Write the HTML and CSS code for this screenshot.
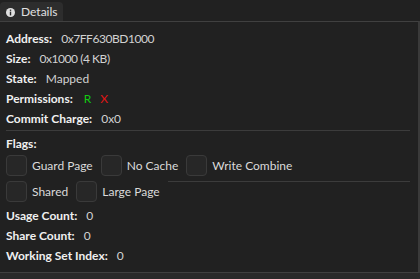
FILE: index.html
```html
<!DOCTYPE html>
<html lang="en">
<head>
    <meta charset="UTF-8">
    <title>Details</title>
    <link rel="stylesheet" href="styles.css">
</head>
<body>
    <div class="tab-bar">
        <div class="tab">
            <svg class="tab-icon" width="9" height="9" viewBox="0 0 9 9">
                <circle cx="4.5" cy="4.5" r="4.5" fill="#e0e0e0"/>
                <rect x="3.8" y="1.6" width="1.4" height="1.3" fill="#2b2b2b"/>
                <rect x="3.8" y="3.6" width="1.4" height="3.8" fill="#2b2b2b"/>
            </svg>
            <span>Details</span>
        </div>
    </div>

    <div class="panel">
        <div class="row"><span class="label">Address:</span><span class="value hex">0x7FF630BD1000</span></div>
        <div class="row"><span class="label">Size:</span><span class="value hex">0x1000 (4 KB)</span></div>
        <div class="row"><span class="label">State:</span><span class="value">Mapped</span></div>
        <div class="row">
            <span class="label">Permissions:</span>
            <span class="perm perm-r">R</span>
            <span class="perm perm-x">X</span>
        </div>
        <div class="row"><span class="label">Commit Charge:</span><span class="value">0x0</span></div>

        <div class="separator"></div>

        <div class="row"><span class="label">Flags:</span></div>
        <div class="flags">
            <label class="flag"><span class="box"></span>Guard Page</label>
            <label class="flag"><span class="box"></span>No Cache</label>
            <label class="flag"><span class="box"></span>Write Combine</label>
        </div>
        <div class="flags flags-second">
            <label class="flag"><span class="box"></span>Shared</label>
            <label class="flag"><span class="box"></span>Large Page</label>
            <div class="flags-rule"></div>
        </div>

        <div class="row"><span class="label">Usage Count:</span><span class="value">0</span></div>
        <div class="row"><span class="label">Share Count:</span><span class="value">0</span></div>
        <div class="row"><span class="label">Working Set Index:</span><span class="value">0</span></div>
    </div>

    <div class="footer"></div>
</body>
</html>
```

FILE: styles.css
```css
* {
    margin: 0;
    padding: 0;
    box-sizing: border-box;
}

body {
    width: 420px;
    height: 279px;
    overflow: hidden;
    background: #212121;
    font-family: 'Lato', 'Noto Sans', sans-serif;
    font-size: 12px;
    color: #d4d4d4;
}

.tab-bar {
    height: 21px;
    padding-top: 2px;
    display: flex;
}

.tab {
    display: flex;
    align-items: center;
    gap: 6px;
    height: 19px;
    padding: 0 5px 0 6px;
    background: #2d2d2d;
    border-radius: 4px 4px 0 0;
    color: #e0e0e0;
}

.tab-icon {
    margin-top: 1px;
}

.panel {
    height: 252px;
    padding: 6px 0 0 6px;
    border-top: 1px solid #404040;
    border-right: 2px solid #3a3a3a;
    border-bottom: 1px solid #404040;
}

.row {
    display: flex;
    align-items: center;
    height: 20px;
    gap: 9px;
}

.label {
    font-weight: 700;
    color: #f0f0f0;
}

.value {
    color: #d2d2d2;
}

.hex {
    letter-spacing: -0.45px;
}

.perm {
    margin-left: 2px;
}

.perm-r {
    color: #12c912;
}

.perm-x {
    color: #e01515;
    margin-left: 0;
}

.separator {
    height: 1px;
    margin: 2px 8px 2px 0;
    background: #3c3c3c;
}

.flags {
    display: flex;
    align-items: center;
    gap: 8px;
    height: 21px;
    margin-top: 2px;
}

.flags-second {
    margin-top: 5px;
    align-items: flex-start;
    margin-bottom: 3px;
}

.flag {
    display: flex;
    align-items: center;
    gap: 5px;
    height: 21px;
    color: #dadada;
}

.box {
    width: 21px;
    height: 21px;
    background: #272727;
    border: 1px solid #3a3a3a;
    border-radius: 4px;
}

.flags-rule {
    flex: 1;
    height: 1px;
    margin: 0 8px 0 0;
    background: #3c3c3c;
}

.footer {
    height: 6px;
    background: #2a2a2a;
}
```
